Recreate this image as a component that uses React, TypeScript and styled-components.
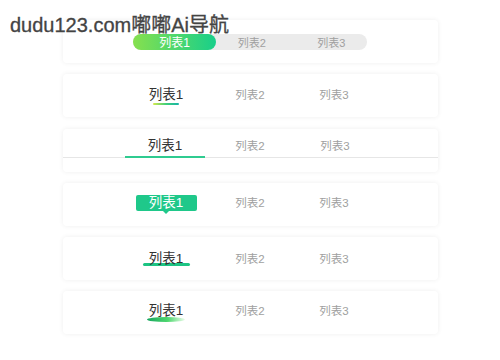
import React from "react";
import styled, { createGlobalStyle, css } from "styled-components";

type Variant = "pill" | "bar" | "line" | "bubble" | "thick" | "blob";

const tabs = ["列表1", "列表2", "列表3"];
const variants: Variant[] = ["pill", "bar", "line", "bubble", "thick", "blob"];

const App: React.FC = () => {
  return (
    <Page>
      <GlobalStyle />
      <Watermark>dudu123.com嘟嘟Ai导航</Watermark>
      {variants.map((variant) => (
        <Card key={variant}>
          {variant === "pill" ? (
            <PillTrack>
              {tabs.map((t, i) => (
                <PillTab key={t} active={i === 0}>
                  {t}
                </PillTab>
              ))}
            </PillTrack>
          ) : (
            <TabRow variant={variant}>
              {tabs.map((t, i) => (
                <Tab key={t} variant={variant} active={i === 0}>
                  <TabLabel variant={variant} active={i === 0}>
                    {t}
                  </TabLabel>
                  {i === 0 && <Indicator variant={variant} />}
                </Tab>
              ))}
            </TabRow>
          )}
        </Card>
      ))}
    </Page>
  );
};

export default App;

const GlobalStyle = createGlobalStyle`
  html, body {
    margin: 0;
    padding: 0;
    background: #fff;
    font-family: "Liberation Sans", "Noto Sans CJK SC", sans-serif;
  }
`;

const Page = styled.div`
  position: relative;
  width: 500px;
  height: 360px;
  padding-top: 20px;
  box-sizing: border-box;
  display: flex;
  flex-direction: column;
  align-items: center;
  gap: 11.3px;
`;

const Watermark = styled.div`
  position: absolute;
  left: 10px;
  top: 9px;
  font-size: 20px;
  color: #444;
  -webkit-text-stroke: 0.3px #444;
  z-index: 2;
`;

const Card = styled.div`
  width: 375px;
  height: 43px;
  background: #fff;
  border-radius: 4px;
  box-shadow: 0 0 5px rgba(0, 0, 0, 0.07);
  display: flex;
  flex-direction: column;
  align-items: center;
  justify-content: center;
  flex-shrink: 0;
`;

const PillTrack = styled.div`
  width: 234px;
  height: 16px;
  border-radius: 8px;
  background: #ebebeb;
  display: flex;
`;

const PillTab = styled.div<{ active: boolean }>`
  height: 16px;
  border-radius: 8px;
  display: flex;
  align-items: center;
  justify-content: center;
  ${(p) =>
    p.active
      ? css`
          width: 86px;
          font-size: 12px;
          color: #fff;
          background: linear-gradient(90deg, #86e04e, #18cf8a);
        `
      : css`
          width: 74px;
          font-size: 11px;
          color: #a0a0a0;
          &:last-child {
            padding-left: 8px;
          }
        `}
`;

const TabRow = styled.div<{ variant: Variant }>`
  display: flex;
  justify-content: center;
  ${(p) =>
    p.variant === "line" &&
    css`
      align-self: stretch;
      border-bottom: 1px solid #e6e6e6;
      margin-bottom: 14px;
      height: 29px;
    `}
`;

const Tab = styled.div<{ variant: Variant; active: boolean }>`
  position: relative;
  width: 84px;
  display: flex;
  flex-direction: column;
  align-items: center;
  ${(p) =>
    p.variant === "line" &&
    css`
      width: 80px;
      height: 29px;
      justify-content: flex-end;
      padding-bottom: 3px;
      box-sizing: border-box;
      &:nth-child(2) {
        width: 90px;
      }
    `}
`;

const TabLabel = styled.span<{ variant: Variant; active: boolean }>`
  position: relative;
  z-index: 1;
  font-size: ${(p) => (p.active ? "13.5px" : "11.5px")};
  color: ${(p) => (p.active ? "#333" : "#a0a0a0")};
  line-height: 16px;
  ${(p) =>
    p.active &&
    p.variant === "bubble" &&
    css`
      color: #fff;
      background: #1fc88a;
      border-radius: 2px;
      width: 61px;
      height: 16px;
      line-height: 16px;
      text-align: center;
    `}
`;

const Indicator = styled.div<{ variant: Variant }>`
  ${(p) => {
    switch (p.variant) {
      case "bar":
        return css`
          width: 26px;
          height: 2px;
          border-radius: 1px;
          background: linear-gradient(90deg, #d7e84c, #3fd07a 50%, #16b3a8);
        `;
      case "line":
        return css`
          position: absolute;
          bottom: -1px;
          left: 0;
          width: 80px;
          height: 2px;
          background: #2fcb90;
        `;
      case "bubble":
        return css`
          width: 0;
          height: 0;
          border-left: 3px solid transparent;
          border-right: 3px solid transparent;
          border-top: 3px solid #1fc88a;
        `;
      case "thick":
        return css`
          width: 47px;
          height: 3px;
          margin-top: -4px;
          border-radius: 2px;
          background: #1cc483;
        `;
      case "blob":
        return css`
          width: 38px;
          height: 5px;
          margin-top: -2px;
          border-radius: 50%;
          background: linear-gradient(90deg, #17a55f, #4fd86f 55%, rgba(160, 240, 150, 0.2));
        `;
      default:
        return "";
    }
  }}
`;
